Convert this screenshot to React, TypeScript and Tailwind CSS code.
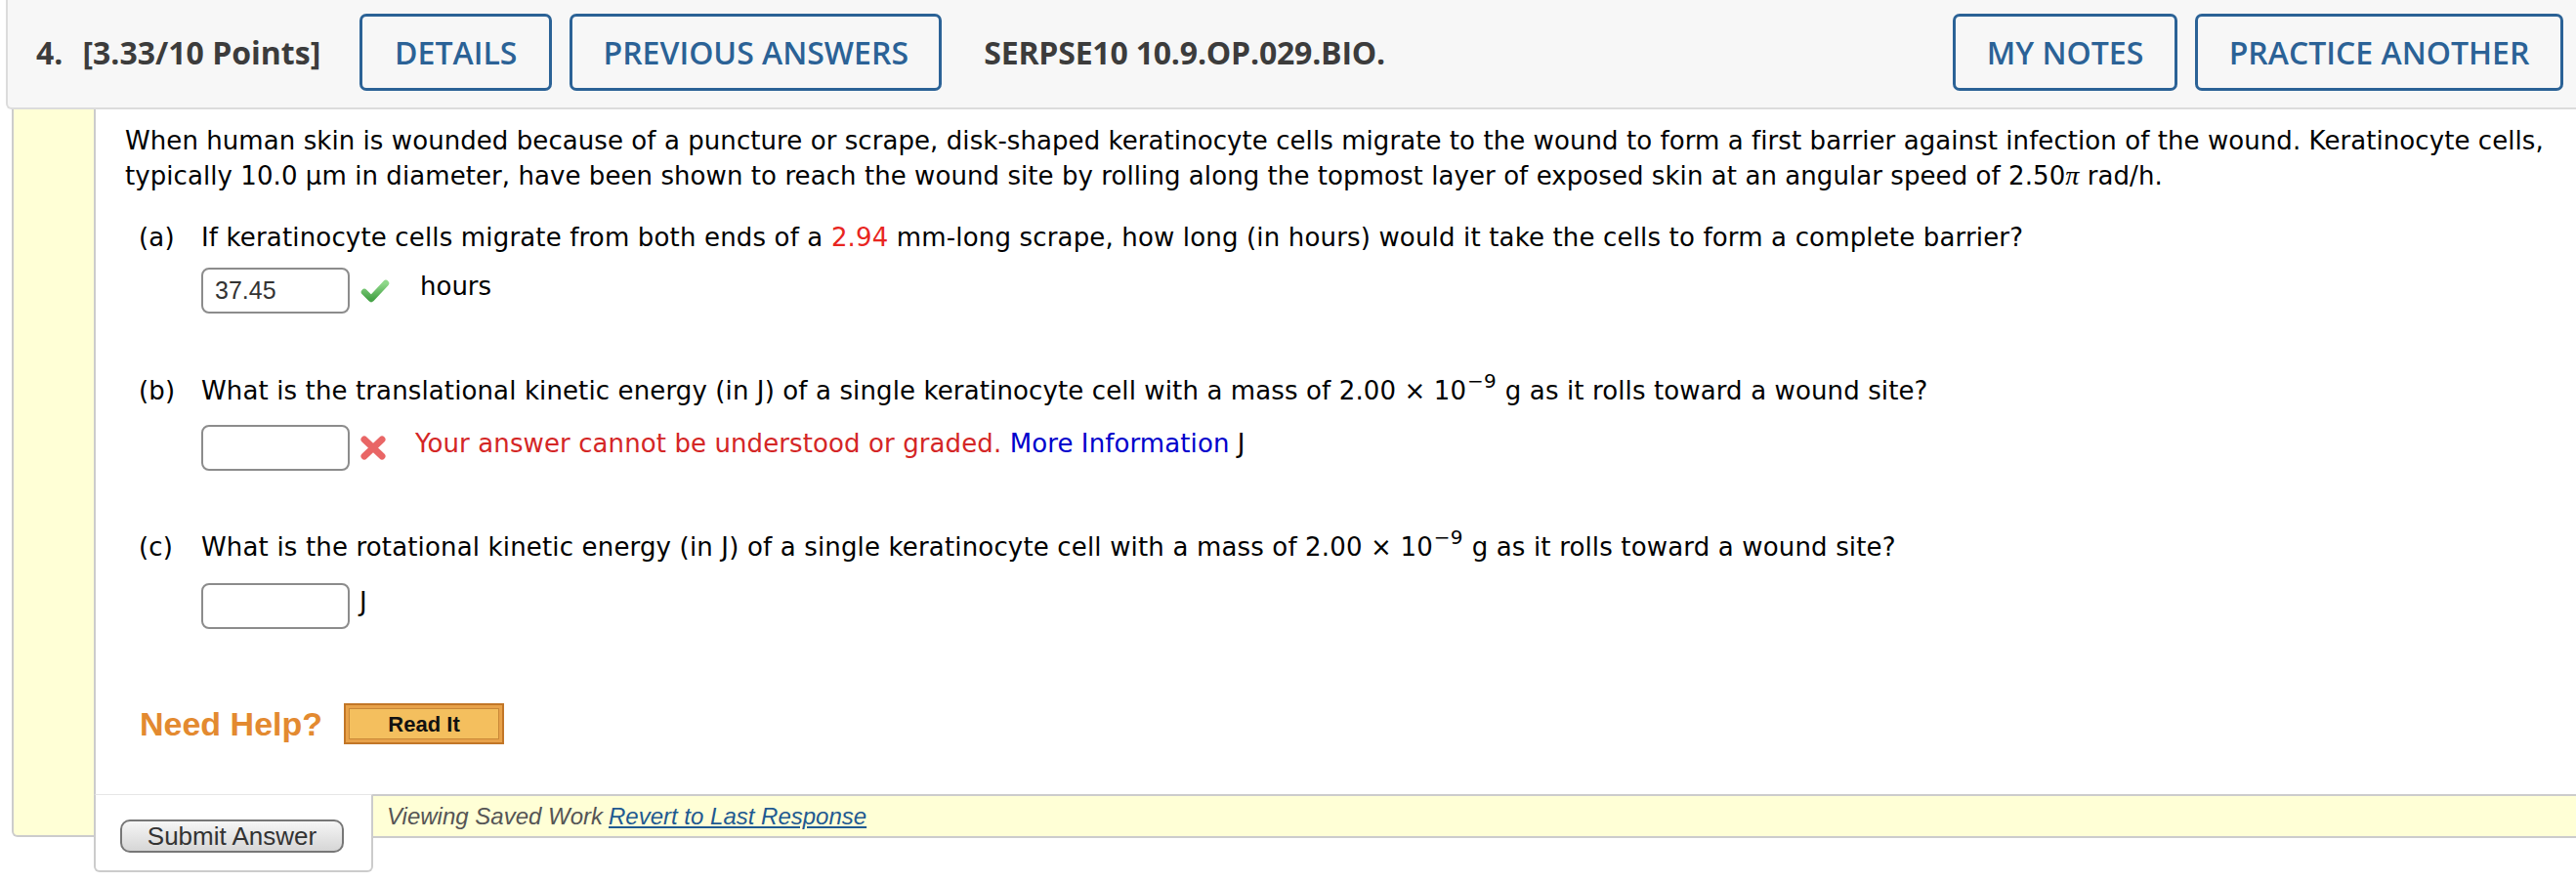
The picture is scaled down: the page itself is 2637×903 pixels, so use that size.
import React from 'react';

const headerBtn =
  'h-[79px] flex items-center justify-center rounded-[7px] border-[3px] border-[#2b6296] text-[#2b6296] text-[32px] font-semibold';

const CheckMark: React.FC = () => (
  <svg width="30" height="25" viewBox="0 0 30 25" className="ml-[11px] mt-[11px] shrink-0">
    <defs>
      <linearGradient id="chk" x1="0" y1="0" x2="0" y2="1">
        <stop offset="0%" stopColor="#8fd88a" />
        <stop offset="100%" stopColor="#46a347" />
      </linearGradient>
    </defs>
    <path d="M4 14 L11 21 L26 5" fill="none" stroke="url(#chk)" strokeWidth="6.5" strokeLinecap="round" strokeLinejoin="round" />
  </svg>
);

const CrossMark: React.FC = () => (
  <svg width="28" height="27" viewBox="0 0 28 27" className="ml-[10px] mt-[10px] shrink-0">
    <g stroke="#e85a5a" strokeWidth="7" strokeLinecap="round" opacity="0.92">
      <path d="M5 5 L23 22" />
      <path d="M23 5 L5 22" />
    </g>
  </svg>
);

const Box: React.FC<{ value?: string }> = ({ value }) => (
  <div className="w-[152px] h-[47px] shrink-0 rounded-[8px] border-2 border-[#8c8c8c] bg-white flex items-center pl-[12px] text-[25px] text-[#333] font-['Liberation_Sans',Arial,sans-serif]">
    {value}
  </div>
);

const Sup: React.FC<{ children: React.ReactNode }> = ({ children }) => (
  <span className="relative -top-[12px] text-[20px] leading-none ml-[1px] mr-[9px]">{children}</span>
);

export default function App() {
  return (
    <div className="w-full h-[903px] bg-white overflow-hidden font-['DejaVu_Sans',Verdana,sans-serif] text-black">
      {/* question header */}
      <header className="ml-[6px] h-[112px] bg-[#f7f7f7] border-l-2 border-b-2 border-[#dcdcdc] rounded-bl-[6px] pt-[14px] pl-[29px] pr-[13px] font-['Open_Sans',sans-serif]">
        <div className="flex items-center h-[79px]">
          <div className="text-[32px] font-bold text-[#3c3c3c] whitespace-nowrap">
            4.<span className="ml-[20px]">[3.33/10 Points]</span>
          </div>
          <button className={`${headerBtn} ml-[40px] w-[197px]`}>DETAILS</button>
          <button className={`${headerBtn} ml-[18px] w-[381px]`}>PREVIOUS ANSWERS</button>
          <div className="ml-[43px] text-[32px] font-bold text-[#3c3c3c] whitespace-nowrap tracking-[-0.2px]">SERPSE10 10.9.OP.029.BIO.</div>
          <button className={`${headerBtn} ml-auto w-[230px]`}>MY NOTES</button>
          <button className={`${headerBtn} ml-[18px] w-[377px]`}>PRACTICE ANOTHER</button>
        </div>
      </header>

      {/* question body card */}
      <div className="flex ml-[12px]">
        <div className="w-[86px] h-[745px] shrink-0 bg-[#ffffd6] border-l-2 border-r-2 border-b-2 border-[#cccccc] rounded-bl-[6px]" />
        <div className="flex-1 flex flex-col">
          <div className="h-[701px] pl-[30px] pt-[14.5px] text-[26px] leading-[35px]">
            <p className="whitespace-nowrap tracking-[0.07px]">
              When human skin is wounded because of a puncture or scrape, disk-shaped keratinocyte cells migrate to the wound to form a first barrier against infection of the wound. Keratinocyte cells,
              <br />
              typically 10.0 μm in diameter, have been shown to reach the wound site by rolling along the topmost layer of exposed skin at an angular speed of 2.50
              <span className="italic font-['Liberation_Serif',serif] text-[28px]">π</span> rad/h.
            </p>

            {/* (a) */}
            <div className="ml-[14px] mt-[28px] flex h-[35px] whitespace-nowrap tracking-[0.16px]">
              <span className="w-[64px] shrink-0">(a)</span>
              <span>
                If keratinocyte cells migrate from both ends of a <span className="text-[#e8261f]">2.94</span> mm-long scrape, how long (in hours) would it take the cells to form a complete barrier?
              </span>
            </div>
            <div className="ml-[78px] mt-[13.5px] flex items-start h-[47px]">
              <Box value="37.45" />
              <CheckMark />
              <span className="ml-[31px] mt-[2px]">hours</span>
            </div>

            {/* (b) */}
            <div className="ml-[14px] mt-[61.5px] flex h-[35px] whitespace-nowrap tracking-[0.12px]">
              <span className="w-[64px] shrink-0">(b)</span>
              <span>
                What is the translational kinetic energy (in J) of a single keratinocyte cell with a mass of 2.00 × 10<Sup>−9</Sup>g as it rolls toward a wound site?
              </span>
            </div>
            <div className="ml-[78px] mt-[17.5px] flex items-start h-[47px] whitespace-nowrap tracking-[0.1px]">
              <Box />
              <CrossMark />
              <span className="ml-[29px] mt-[2px]">
                <span className="text-[#d42626]">Your answer cannot be understood or graded.</span>{' '}
                <span className="text-[#0000cc]">More Information</span> J
              </span>
            </div>

            {/* (c) */}
            <div className="ml-[14px] mt-[60.5px] flex h-[35px] whitespace-nowrap tracking-[0.16px]">
              <span className="w-[64px] shrink-0">(c)</span>
              <span>
                What is the rotational kinetic energy (in J) of a single keratinocyte cell with a mass of 2.00 × 10<Sup>−9</Sup>g as it rolls toward a wound site?
              </span>
            </div>
            <div className="ml-[78px] mt-[19.5px] flex items-start h-[47px]">
              <Box />
              <span className="ml-[10px] mt-[2px]">J</span>
            </div>

            {/* help */}
            <div className="ml-[15px] mt-[76px] flex items-center h-[42px] gap-[22px] font-['Liberation_Sans',Arial,sans-serif]">
              <span className="text-[34px] font-bold text-[#e38a30] leading-none">Need Help?</span>
              <button className="w-[164px] h-[42px] bg-[#e8a24a] border-2 border-[#c27627] p-[3px]">
                <span className="flex items-center justify-center w-full h-full bg-[#f4bf5e] border border-[#c98837] text-[22px] font-bold text-[#111]">
                  Read It
                </span>
              </button>
            </div>
          </div>

          {/* submit row */}
          <div className="flex items-start">
            <div className="-ml-[2px] w-[286px] h-[80px] shrink-0 bg-white border-l-2 border-r-2 border-b-2 border-[#cccccc] border-t border-t-[#e6e6e6] rounded-b-[6px] pt-[25px] pl-[25px]">
              <button className="w-[229px] h-[34px] rounded-[10px] border-2 border-[#777] bg-gradient-to-b from-[#f6f6f6] to-[#d6d6d6] text-[26px] leading-none text-[#333] font-['Liberation_Sans',Arial,sans-serif] flex items-center justify-center">
                Submit Answer
              </button>
            </div>
            <div className="flex-1 h-[45px] bg-[#ffffd6] border-t-2 border-b-2 border-[#cccccc] flex items-center pl-[14px] text-[24px] italic font-['Liberation_Sans',Arial,sans-serif] whitespace-nowrap">
              <span className="text-[#555]">Viewing Saved Work</span>
              <a href="#" className="ml-[6px] text-[#1f5a91] underline">Revert to Last Response</a>
            </div>
          </div>
        </div>
      </div>
    </div>
  );
}
